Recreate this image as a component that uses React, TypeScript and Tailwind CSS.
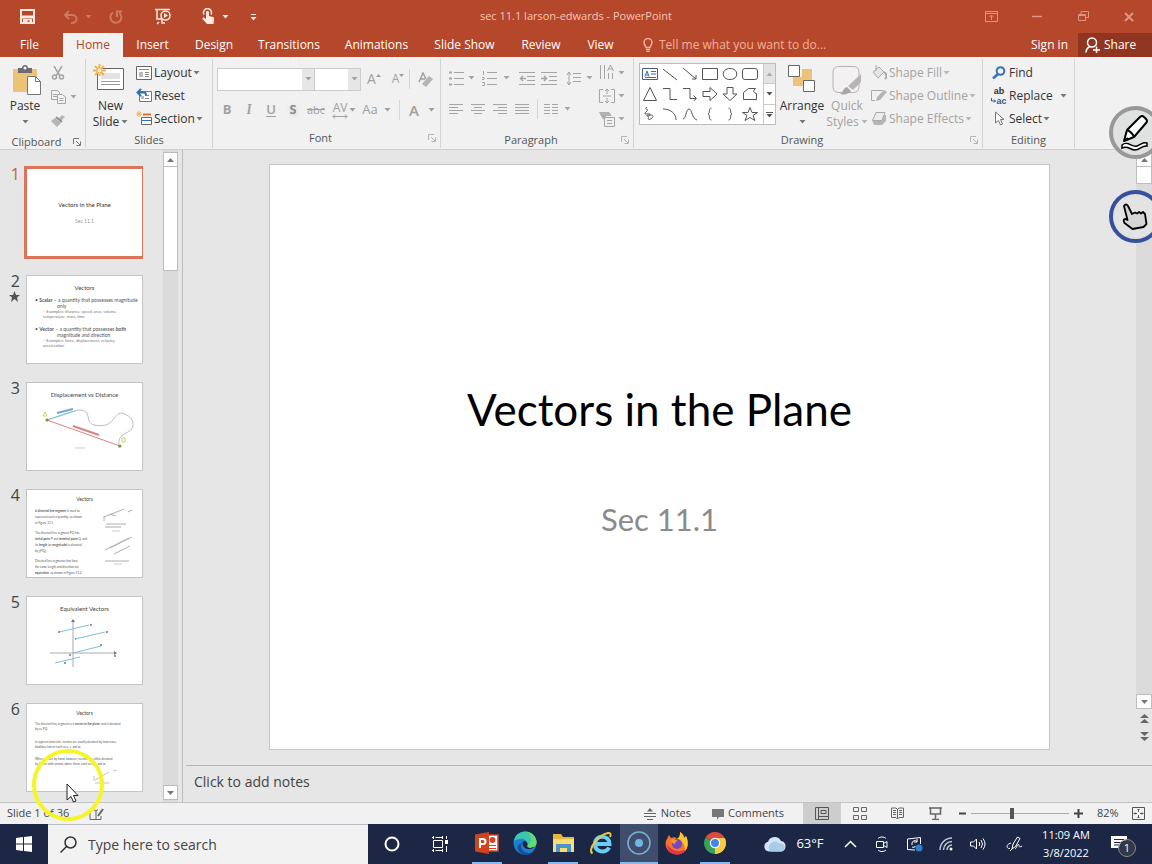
import type { ReactNode } from 'react'
import { clsx } from 'clsx'

// ---------- shared bits ----------

function Svg({ w, h, children, className }: { w: number; h: number; children: ReactNode; className?: string }) {
  return (
    <svg
      width={w}
      height={h}
      viewBox={`0 0 ${w} ${h}`}
      fill="none"
      stroke="currentColor"
      className={clsx('shrink-0', className)}
      aria-hidden="true"
    >
      {children}
    </svg>
  )
}

function Caret({ className }: { className?: string }) {
  return (
    <Svg w={7} h={4} className={className}>
      <path d="M.5 0h6L3.500 3.500z" fill="currentColor" stroke="none" />
    </Svg>
  )
}

function Cell({ w, label, children, className }: { w: string; label: string; children: ReactNode; className?: string }) {
  return (
    <button aria-label={label} className={clsx('flex h-6 shrink-0 items-center justify-center', w, className)}>
      {children}
    </button>
  )
}

function VLine() {
  return <span className="h-5 w-px shrink-0 bg-[#d5d5d5]" />
}

// ---------- title bar ----------

function TitleBar() {
  return (
    <header className="relative flex h-[33px] shrink-0 items-center bg-[#b5472a] text-[#fbe9e2]">
      <div className="flex items-center pl-[15px]">
        <Cell w="w-6" label="Save">
          <Svg w={15} h={15}>
            <path d="M1 1h13v13H1z" strokeWidth="2" />
            <path d="M1 6.500h13v3H1z" fill="currentColor" stroke="none" />
            <path d="M3 10h9v4h-2.500v-2.500h-2V14H3z" fill="currentColor" stroke="none" />
          </Svg>
        </Cell>
        <Cell w="w-6" label="Undo" className="ml-[19px] text-[#d0795f]">
          <Svg w={15} h={14}>
            <path d="M2 5h7.500a4 4 0 0 1 0 8H8M6 1 2 5l4 4" strokeWidth="2" />
          </Svg>
        </Cell>
        <Caret className="ml-[3px] text-[#d0795f]" />
        <Cell w="w-6" label="Redo" className="ml-[12px] text-[#d0795f]">
          <Svg w={14} h={14}>
            <path d="M4 2.500A5.500 5.500 0 1 0 10.500 3M8 7V1.500h5" strokeWidth="2" />
          </Svg>
        </Cell>
        <Cell w="w-6" label="Start From Beginning" className="ml-[23px]">
          <Svg w={18} h={17}>
            <path d="M1 1.500h15M3 2v9h5M5 14l-2 2M8 11v4h3" strokeWidth="1.500" />
            <circle cx="11.500" cy="7.500" r="4.500" strokeWidth="1.500" />
            <path d="M10 5l4 2.500-4 2.500z" fill="currentColor" stroke="none" />
          </Svg>
        </Cell>
        <Cell w="w-6" label="Touch/Mouse Mode" className="ml-[21px]">
          <Svg w={14} h={17}>
            <path
              d="M5 4.500c0-2 3-2 3 0V8l4 1c1 .3 1 1 1 2l-.5 5H6l-4.500-5c-.5-1 1-2 2-1L5 11z"
              fill="currentColor"
              stroke="none"
            />
            <path d="M3 6.500a4 4 0 1 1 7 0" strokeWidth="1.500" />
          </Svg>
        </Cell>
        <Caret className="ml-[2px]" />
        <Cell w="w-6" label="Customize Quick Access Toolbar" className="ml-[12px]">
          <Svg w={7} h={8}>
            <path d="M1 1.500h5" />
            <path d="M.5 4h6l-3 3.500z" fill="currentColor" stroke="none" />
          </Svg>
        </Cell>
      </div>
      <h1 className="absolute inset-x-0 text-center text-[11px] text-[#f8c6b4]">
        sec 11.1 larson-edwards - PowerPoint
      </h1>
      <div className="relative ml-auto flex items-center pr-[11px] text-[#dc9681]">
        <Cell w="w-6" label="Ribbon Display Options">
          <Svg w={13} h={11}>
            <path d="M.5.5h12v10H.5zM.5 2.500h12M6.500 9V4.500M4.500 6l2-2 2 2" />
          </Svg>
        </Cell>
        <Cell w="w-6" label="Minimize" className="ml-[22px]">
          <Svg w={10} h={3}>
            <path d="M0 1.500h10" strokeWidth="1.500" />
          </Svg>
        </Cell>
        <Cell w="w-6" label="Restore Down" className="ml-[22px]">
          <Svg w={11} h={11}>
            <path d="M.5 3.500h7v6h-7zM3 3V.5h7.500v6H8M.5 4.500h7" />
          </Svg>
        </Cell>
        <Cell w="w-6" label="Close" className="ml-[22px]">
          <Svg w={10} h={10}>
            <path d="M1 1l8 8M9 1 1 9" strokeWidth="2" />
          </Svg>
        </Cell>
      </div>
    </header>
  )
}

const tabs = [
  { name: 'File', width: 'w-[63px] pr-1' },
  { name: 'Home', width: 'w-[60px]' },
  { name: 'Insert', width: 'w-[59px]' },
  { name: 'Design', width: 'w-16' },
  { name: 'Transitions', width: 'w-[86px]' },
  { name: 'Animations', width: 'w-[89px]' },
  { name: 'Slide Show', width: 'w-[87px]' },
  { name: 'Review', width: 'w-[66px]' },
  { name: 'View', width: 'w-[53px]' },
]

function TabRow() {
  return (
    <nav className="flex h-6 shrink-0 bg-[#b5472a] text-xs text-white">
      {tabs.map(tab => (
        <button
          key={tab.name}
          className={clsx(
            'flex h-6 items-center justify-center whitespace-nowrap',
            tab.width,
            tab.name === 'Home' && 'bg-[#f1f1f1] text-[#b5472a]',
          )}
        >
          {tab.name}
        </button>
      ))}
      <label className="flex flex-1 items-center gap-[6px] pl-4 text-[#f3b09b]">
        <Svg w={10} h={14}>
          <path d="M3 9.500C3 8 1 7 1 4.500a4 4 0 0 1 8 0C9 7 7 8 7 9.500zM3 11.500h4M3.500 13.500h3" strokeWidth="1.500" />
        </Svg>
        <input
          className="w-48 bg-transparent text-xs placeholder:text-[#f3b09b]"
          placeholder="Tell me what you want to do..."
        />
      </label>
      <button className="px-[10px]">Sign in</button>
      <button className="flex w-[74px] items-center gap-1 bg-[#903620] pl-[7px]">
        <Svg w={15} h={16}>
          <circle cx="7" cy="5.500" r="4.500" strokeWidth="1.500" />
          <path d="M1 15.500c0-3 2-5 4-6M8 13h7M11.500 9.500v7" strokeWidth="1.500" />
        </Svg>
        Share
      </button>
    </nav>
  )
}

// ---------- ribbon ----------

function Group({ label, width, launcher, dim, children }: {
  label: string
  width: string
  launcher?: boolean
  dim?: boolean
  children: ReactNode
}) {
  return (
    <section className={clsx('flex shrink-0 flex-col', width)}>
      <div className="flex h-[89px] flex-col border-r border-[#d4d4d4]">
        <div className="flex h-[73px] pt-[2px]">{children}</div>
        <div className="flex h-5 shrink-0 items-center text-[11px] text-[#555]">
          <span className="flex-1 text-center">{label}</span>
          {launcher && (
            <button aria-label={`${label} settings`} className={clsx('w-3', dim ? 'text-[#b5b5b5]' : 'text-[#777]')}>
              <Svg w={8} h={8}>
                <path d="M.5 6V.5H6M3 3l4 4M7.500 3.500v4h-4" />
              </Svg>
            </button>
          )}
        </div>
      </div>
    </section>
  )
}

function BigButton({ icon, lines, width, dim }: { icon: ReactNode; lines: string[]; width: string; dim?: boolean }) {
  return (
    <button
      className={clsx('flex flex-col items-center whitespace-nowrap pt-[3px] text-xs', width, dim ? 'text-[#a3a3a3]' : 'text-[#333]')}
    >
      {icon}
      <span className="h-5 leading-5">{lines[0]}</span>
      <span className="flex h-3 items-center gap-[2px] leading-3">
        {lines[1]}
        <Caret className={dim ? 'text-[#b5b5b5]' : 'text-[#777]'} />
      </span>
    </button>
  )
}

function SmallButton({ icon, label, caret, dim, caretGap }: {
  icon: ReactNode
  label: string
  caret?: boolean
  dim?: boolean
  caretGap?: boolean
}) {
  return (
    <button
      className={clsx('flex h-[23px] items-center gap-px whitespace-nowrap text-xs', dim ? 'text-[#a3a3a3]' : 'text-[#333]')}
    >
      <span className="flex w-[18px] justify-center">{icon}</span>
      {label}
      {caret && <Caret className={clsx(caretGap && 'ml-[6px]', dim ? 'text-[#b5b5b5]' : 'text-[#777]')} />}
    </button>
  )
}

function ClipboardGroup() {
  return (
    <Group label="Clipboard" width="w-[86px]" launcher>
      <BigButton
        width="w-[50px]"
        lines={['Paste']}
        icon={
          <Svg w={30} h={32} className="ml-1">
            <path d="M1 5h24v23H1z" fill="#ecc376" stroke="none" />
            <path d="M6 4h4c0-4 6-4 6 0h4v5H6z" fill="#6b6b72" stroke="none" />
            <circle cx="13" cy="4" r="1.500" fill="#fff" stroke="none" />
            <path d="M15.500 12.500h8l5 5v13h-13z" fill="#fff" stroke="#777" />
            <path d="M23.500 12.500v5h5" stroke="#777" />
          </Svg>
        }
      />
      <div className="flex flex-col text-[#a5a5a5]">
        <Cell w="w-4" label="Cut">
          <Svg w={14} h={14}>
            <path d="M3 0l6 10M11 0 5 10" strokeWidth="1.500" />
            <circle cx="3.500" cy="11" r="2" strokeWidth="1.500" />
            <circle cx="10.500" cy="11" r="2" strokeWidth="1.500" />
          </Svg>
        </Cell>
        <div className="flex items-center gap-1">
          <Cell w="w-4" label="Copy">
            <Svg w={15} h={14}>
              <path d="M.5.5h6l2 2v7h-8zM2 4.500h4M2 6.500h4" />
              <path d="M6.500 4.500h5l3 2.500v6.500h-8z" fill="#f1f1f1" />
              <path d="M8.500 8.500h4M8.500 10.500h4" />
            </Svg>
          </Cell>
          <Caret />
        </div>
        <Cell w="w-4" label="Format Painter">
          <Svg w={16} h={14}>
            <path d="M1 7l4-3 6 5-4 4zM9 4l3-3 3 2-4 4z" fill="#b5b5b5" stroke="none" />
            <path d="M6 3l6 5" stroke="#8f8f8f" strokeWidth="2" />
          </Svg>
        </Cell>
      </div>
    </Group>
  )
}

function SlidesGroup() {
  return (
    <Group label="Slides" width="w-[127px]">
      <BigButton
        width="w-[49px]"
        lines={['New', 'Slide']}
        icon={
          <Svg w={32} h={32} className="mr-1">
            <path d="M4.500 4.500h26v21h-26z" fill="#fff" stroke="#666" />
            <path d="M8 9h19v6H8z" fill="#e3e3e3" stroke="none" />
            <path d="M8 17.500h19M8 20.500h19" stroke="#999" />
            <path d="M6.500 0v12M0 6.500h13M2 2l9 9M11 2l-9 9" stroke="#f1b357" strokeWidth="2" />
            <circle cx="6.500" cy="6.500" r="2.500" fill="#fff6e0" stroke="#f1b357" />
          </Svg>
        }
      />
      <div className="flex flex-col">
        <SmallButton
          label="Layout"
          caret
          icon={
            <Svg w={16} h={14}>
              <path d="M.5.5h15v13H.5z" fill="#fff" stroke="#666" />
              <path d="M3 3.500h10M9 6.500h4M9 8.500h4M9 10.500h4" stroke="#888" />
              <path d="M3 6h4v5H3z" fill="#b9b9b9" stroke="none" />
            </Svg>
          }
        />
        <SmallButton
          label="Reset"
          icon={
            <Svg w={16} h={15}>
              <path d="M3.500 3.500h12v10h-12z" fill="#fff" stroke="#777" />
              <path d="M9 7.500h4M9 10.500h4" stroke="#888" />
              <path d="M5 8h3v3H5z" fill="#b9b9b9" stroke="none" />
              <path d="M2 4.500h6c1.500 0 2 1 2 3M5 1 1.500 4.500 5 8" stroke="#3572b0" strokeWidth="2" />
            </Svg>
          }
        />
        <SmallButton
          label="Section"
          caret
          icon={
            <Svg w={16} h={15}>
              <path d="M3 0v6M0 3h6M1 1l4 4M5 1 1 5" stroke="#f1b357" />
              <path d="M7 3.500h8" stroke="#d9762b" strokeWidth="2" />
              <path d="M5.500 6.500h10v7h-10z" fill="#fff" stroke="#666" />
              <path d="M6 9.500h9" stroke="#3572b0" />
            </Svg>
          }
        />
      </div>
    </Group>
  )
}

function FontGroup() {
  return (
    <Group label="Font" width="w-[228px]" launcher dim>
      <div className="flex flex-col gap-[7px] pl-1 pt-[6px] text-[#a0a0a0]">
        <div className="flex items-center">
          <div className="flex h-[23px] w-[98px] border border-[#ccc] bg-white">
            <input aria-label="Font name" className="w-full min-w-0" disabled />
            <span className="flex w-3 shrink-0 items-center justify-center bg-[#e6e6e6]"><Caret /></span>
          </div>
          <div className="flex h-[23px] w-[46px] border border-l-0 border-[#ccc] bg-white">
            <input aria-label="Font size" className="w-full min-w-0" disabled />
            <span className="flex w-3 shrink-0 items-center justify-center bg-[#e6e6e6]"><Caret /></span>
          </div>
          <Cell w="w-[26px]" label="Increase Font Size">
            <span className="text-sm">A</span>
            <Svg w={5} h={3} className="mb-2"><path d="M0 3 2.500 0 5 3z" fill="currentColor" stroke="none" /></Svg>
          </Cell>
          <Cell w="w-[22px]" label="Decrease Font Size">
            <span className="text-xs">A</span>
            <Svg w={5} h={3} className="mb-2"><path d="M0 0h5L2.500 3z" fill="currentColor" stroke="none" /></Svg>
          </Cell>
          <VLine />
          <Cell w="w-[30px]" label="Clear All Formatting">
            <Svg w={15} h={15}>
              <path d="M1 10 5 1l3 6M2.500 7H7" strokeWidth="1.500" />
              <path d="M4 12l7-8 4 3-7 8z" fill="#b5b5b5" stroke="none" />
            </Svg>
          </Cell>
        </div>
        <div className="flex items-center text-[13px]">
          <Cell w="w-5" label="Bold"><b>B</b></Cell>
          <Cell w="w-6" label="Italic"><i className="font-serif font-bold">I</i></Cell>
          <Cell w="w-5" label="Underline"><span className="font-semibold underline underline-offset-2">U</span></Cell>
          <Cell w="w-6" label="Text Shadow"><b className="text-[#8c8c8c] drop-shadow-sm">S</b></Cell>
          <Cell w="w-[22px]" label="Strikethrough"><span className="text-[11px] line-through">abc</span></Cell>
          <Cell w="w-[26px]" label="Character Spacing" className="flex-col">
            <span className="text-xs leading-3">AV</span>
            <Svg w={16} h={5}><path d="M1 2.500h14M3 .5l-2 2 2 2M13 .5l2 2-2 2" /></Svg>
          </Cell>
          <Caret className="-ml-1" />
          <Cell w="w-7" label="Change Case">Aa</Cell>
          <Caret />
          <span className="w-2" />
          <VLine />
          <Cell w="w-[28px]" label="Font Color"><span className="text-[15px] font-semibold">A</span></Cell>
          <Caret />
        </div>
      </div>
    </Group>
  )
}

function Lines({ rows, w = 15 }: { rows: [number, number][]; w?: number }) {
  return (
    <Svg w={w} h={12}>
      {rows.map(([a, b], i) => (
        <path key={i} d={`M${a} ${i * 3 + 1.5}H${b}`} />
      ))}
    </Svg>
  )
}

function ParagraphGroup() {
  const list = (numbered: boolean) => (
    <Svg w={15} h={15}>
      {[1.5, 7.5, 13.5].map(y => (
        <path key={y} d={`M5 ${y}h10`} />
      ))}
      {numbered
        ? <path d="M1.500 0v4M0 6.500h2v2H0M0 11.500h2.500M0 14.500h2.500v-3" />
        : <path d="M0 1.500h3M0 7.500h3M0 13.500h3" strokeWidth="2" />}
    </Svg>
  )
  return (
    <Group label="Paragraph" width="w-[193px]" launcher dim>
      <div className="flex flex-col gap-[7px] pl-1 pt-[5px] text-[#a5a5a5]">
        <div className="flex items-center">
          <Cell w="w-[22px]" label="Bullets">{list(false)}</Cell>
          <Caret className="ml-px" />
          <Cell w="w-[28px]" label="Numbering">{list(true)}</Cell>
          <Caret />
          <span className="w-[6px]" />
          <Cell w="w-[22px]" label="Decrease List Level">
            <Svg w={16} h={13}><path d="M0 .5h16M8 4.500h8M8 8.500h8M0 12.500h16" /><path d="M7 6.500H1M4 4 1.500 6.500 4 9" strokeWidth="1.500" /></Svg>
          </Cell>
          <Cell w="w-[22px]" label="Increase List Level">
            <Svg w={16} h={13}><path d="M0 .5h16M8 4.500h8M8 8.500h8M0 12.500h16" /><path d="M0 6.500h6M3 4l2.500 2.500L3 9" strokeWidth="1.500" /></Svg>
          </Cell>
          <Cell w="w-[26px]" label="Line Spacing">
            <Svg w={15} h={15}><path d="M7 2.500h8M7 6.500h8M7 10.500h8M3 1v13M1 4l2-3 2 3M1 11l2 3 2-3" /></Svg>
          </Cell>
          <Caret />
        </div>
        <div className="flex items-center">
          <Cell w="w-[22px]" label="Align Left"><Lines rows={[[0, 14], [0, 9], [0, 14], [0, 9]]} /></Cell>
          <Cell w="w-[22px]" label="Center"><Lines rows={[[0, 14], [3, 11], [0, 14], [3, 11]]} /></Cell>
          <Cell w="w-[22px]" label="Align Right"><Lines rows={[[0, 14], [5, 14], [0, 14], [5, 14]]} /></Cell>
          <Cell w="w-[22px]" label="Justify"><Lines rows={[[0, 14], [0, 14], [0, 14], [0, 14]]} /></Cell>
          <span className="w-1" />
          <VLine />
          <Cell w="w-[26px]" label="Columns">
            <Svg w={14} h={12}>
              <path d="M0 1.500h6M8 1.500h6M0 4.500h6M8 4.500h6M0 7.500h6M8 7.500h6M0 10.500h6M8 10.500h6" />
            </Svg>
          </Cell>
          <Caret />
        </div>
      </div>
      <div className="ml-auto flex w-[34px] flex-col text-[#a5a5a5]">
        <button aria-label="Text Direction" className="flex h-[23px] items-center gap-[3px]">
          <Svg w={16} h={16}><path d="M1.500 0v14M5.500 0v14M9.500 8v6M13.500 8v6M8.500 6l3-6 3 6M9.500 4h4" /></Svg>
          <Caret />
        </button>
        <button aria-label="Align Text" className="flex h-[23px] items-center gap-[3px]">
          <Svg w={16} h={16}><path d="M4 1.500H.5v13H4M12 1.500h3.500v13H12M8 1v5M6 3l2-2 2 2M8 15v-5M6 13l2 2 2-2M4 8h8" /></Svg>
          <Caret />
        </button>
        <button aria-label="Convert to SmartArt" className="flex h-[23px] items-center gap-[3px]">
          <Svg w={16} h={16}>
            <path d="M0 1h10l3 4H7v5L3 7z" fill="#b0b0b0" stroke="none" />
            <path d="M5.500 6.500h10v9h-10z" fill="#f1f1f1" />
            <path d="M8 9.500h5M8 12.500h5" />
          </Svg>
          <Caret />
        </button>
      </div>
    </Group>
  )
}

// 6 x 3 shape gallery, every shape sits in a 16x14 box
const shapes = [
  'M1 2l14 11',
  'M1 1l13 11M14 8v4h-4',
  'M.5 1.500h15v11H.5z',
  'M8 1.500c9 0 9 11 0 11s-9-11 0-11z',
  'M3 1.500h10q2.500 0 2.500 2.500v6q0 2.500-2.500 2.500H3q-2.500 0-2.500-2.500V4q0-2.500 2.500-2.500z',
  'M8 .5l6.500 13h-13z',
  'M1 1.500h7v11h7',
  'M1 1.500h7v10h6M11.500 8.500l3 3-3 2.500',
  'M1 4.500h7v-4l7 6.500-7 6.500v-4H1z',
  'M5 .5h6V7h4l-7 6.500L1 7h4z',
  'M1.500 12.500v-7l5-4h7q-4 4 1 5v6z',
  'M5 0C0 3 9 1 4 5s6 0 4 3-5 0-2 0 7 0 4 3-5 1-3-1',
  'M1 2c7 0 13 4 13 11',
  'M1 12C4 12 4 2 7 2s3 10 8 11',
  'M9.500 1C6 1 8.500 6.500 6 7c2.500.5 0 6 3.500 6',
  'M6.500 1C10 1 7.500 6.500 10 7c-2.500.5 0 6-3.500 6',
  'M8 .5l2 5h5.500l-4.500 3 2 5-5-3-5 3 2-5L.5 5.500H6z',
]

function DrawingGroup() {
  return (
    <Group label="Drawing" width="w-[349px]" launcher dim>
      <div className="ml-[5px] mt-[2px] flex h-[62px] border border-[#bdbdbd] bg-white text-[#555]">
        <div className="grid w-[123px] grid-cols-6 grid-rows-3 place-items-center pr-[3px]">
          <button aria-label="Text Box">
            <Svg w={16} h={14}>
              <path d="M.5 1.500h15v11H.5z" stroke="#44608a" />
              <path d="M3 9.500 5 4l2 5.500M4 8h2M9 4.500h5M9 7h5M3 10.500h11" stroke="#3572b0" />
            </Svg>
          </button>
          {shapes.map((d, i) => (
            <button key={i} aria-label={`Shape ${i + 1}`}>
              <Svg w={16} h={14}><path d={d} /></Svg>
            </button>
          ))}
        </div>
        <div className="flex w-3 flex-col divide-y divide-[#c8c8c8] border-l border-[#c8c8c8]">
          <button aria-label="Row up" className="flex flex-1 items-center justify-center bg-[#e3e3e3]">
            <Caret className="rotate-180 text-[#aaa]" />
          </button>
          <button aria-label="Row down" className="flex flex-1 items-center justify-center"><Caret /></button>
          <button aria-label="More shapes" className="flex flex-1 items-center justify-center">
            <Svg w={7} h={7}><path d="M0 1.500h7" /><path d="M.5 3h6l-3 3.500z" fill="currentColor" stroke="none" /></Svg>
          </button>
        </div>
      </div>
      <BigButton
        width="w-[52px]"
        lines={['Arrange']}
        icon={
          <Svg w={28} h={32}>
            <path d="M14 5h10v11H14zM5 13h11v9H5z" fill="#ecc376" stroke="none" />
            <path d="M.5 1.500h11v11H.5zM15.500 16.500h11v11h-11z" fill="#fff" stroke="#666" />
          </Svg>
        }
      />
      <BigButton
        dim
        width="w-[38px]"
        lines={['Quick', 'Styles']}
        icon={
          <Svg w={30} h={32}>
            <path d="M7 2.500h14q6 0 6 6v14q0 6-6 6H7q-6 0-6-6v-14q0-6 6-6z" fill="#f4f1f2" stroke="#bbb0b3" />
            <path d="M29 10v8l-8 8-5-4z" fill="#b5b5b5" stroke="none" />
            <path d="M8 30c3-1 3-6 7-7l4 4c-2 3-7 4-11 3z" fill="#a8a8a8" stroke="none" />
          </Svg>
        }
      />
      <div className="ml-1 flex flex-col">
        <SmallButton
          dim
          caret
          label="Shape Fill"
          icon={
            <Svg w={16} h={15}>
              <path d="M2 7l6-5 5 5-6 6zM5 6V0" fill="#e4e4e4" stroke="#aaa" />
              <path d="M13 7c3 2 3 5 1 7" stroke="#aaa" strokeWidth="2" />
            </Svg>
          }
        />
        <SmallButton
          dim
          caret
          label="Shape Outline"
          icon={
            <Svg w={16} h={13}>
              <path d="M12 1.500H.5v10H4M7 10.500l7-8" stroke="#aaa" />
              <path d="M5 12l1-4 7-7 3 2-7 8z" fill="#b5b5b5" stroke="none" />
            </Svg>
          }
        />
        <SmallButton
          dim
          caret
          label="Shape Effects"
          icon={
            <Svg w={16} h={13}>
              <path d="M5 3h10v6l-4 4H3L1 8z" fill="#b5b5b5" stroke="none" />
              <path d="M5 .5h9l-3 8H1.500z" fill="#ececec" stroke="#aaa" />
            </Svg>
          }
        />
      </div>
    </Group>
  )
}

function EditingGroup() {
  return (
    <Group label="Editing" width="w-[92px]">
      <div className="flex flex-col pl-[7px]">
        <SmallButton
          label="Find"
          icon={
            <Svg w={14} h={13} className="text-[#3572b0]">
              <circle cx="8.500" cy="5" r="3.800" strokeWidth="2" />
              <path d="M6 8l-5 4.500" strokeWidth="2.500" />
            </Svg>
          }
        />
        <SmallButton
          label="Replace"
          caret
          caretGap
          icon={
            <span className="flex flex-col font-['Liberation_Sans',sans-serif] text-[9px] font-bold leading-[10px]">
              <span>ab</span>
              <span className="flex items-center text-[#41528f]">
                <Svg w={5} h={5}><path d="M.5 0v3h4M3 1.500 4.500 3 3 4.500" /></Svg>
                ac
              </span>
            </span>
          }
        />
        <SmallButton
          label="Select"
          caret
          icon={
            <Svg w={11} h={15}>
              <path d="M1.500 1v11l3-2.500 2 4.500 2-1-2-4.500H10z" fill="#fff" stroke="#777" />
            </Svg>
          }
        />
      </div>
    </Group>
  )
}

// ---------- slide panel ----------

function Thumb({ number, active, star, children }: { number: number; active?: boolean; star?: boolean; children: ReactNode }) {
  return (
    <li className="flex gap-[6px]">
      <div className="flex w-5 flex-col items-end">
        <span className={clsx('text-base leading-3', active ? 'text-[#c8603f]' : 'text-[#444]')}>{number}</span>
        {star && (
          <Svg w={11} h={11} className="mt-1 text-[#555]">
            <path d="M5.500 0l1.500 4h4L8 6.500l1 4.500-3.500-3L2 11l1-4.500L0 4h4z" fill="currentColor" stroke="none" />
          </Svg>
        )}
      </div>
      <button
        aria-label={`Slide ${number}`}
        className={clsx(
          'flex h-[89px] w-[117px] flex-col justify-start overflow-hidden bg-white text-left font-[Lato,sans-serif] whitespace-nowrap text-[#555]',
          active ? 'outline-3 -outline-offset-1 outline-[#dc7459]' : 'border border-[#c4c4c4]',
        )}
      >
        {children}
      </button>
    </li>
  )
}

function ThumbTitle({ children }: { children: ReactNode }) {
  return <p className="w-full pt-2 text-center text-[6px] leading-[7px] text-[#444]">{children}</p>
}

function SlideList() {
  return (
    <ol className="flex h-full flex-col gap-[18px] overflow-hidden pt-[18px]">
      <Thumb number={1} active>
        <div className="flex h-full w-full flex-col items-center justify-center gap-[10px] pb-1">
          <p className="pt-1 text-[6px] leading-[7px] text-[#333]">Vectors in the Plane</p>
          <p className="text-[5px] leading-[6px] text-[#999]">Sec 11.1</p>
        </div>
      </Thumb>
      <Thumb number={2} star>
        <ThumbTitle>Vectors</ThumbTitle>
        <div className="pl-2 pt-[6px] text-[5px] leading-[6px]">
          <p>• <b>Scalar</b> – a quantity that possesses magnitude</p>
          <p className="pl-[22px]">only</p>
          <div className="pl-2 text-[4px] leading-[5px] text-[#777]">
            <p>– Examples: distance, speed, area, volume,</p>
            <p>temperature, mass, time</p>
          </div>
          <p className="pt-[7px]">• <b>Vector</b> – a quantity that possesses <b>both</b></p>
          <p className="pl-[22px]">magnitude and direction</p>
          <div className="pl-2 text-[4px] leading-[5px] text-[#777]">
            <p>– Examples: force, displacement, velocity,</p>
            <p>acceleration</p>
          </div>
        </div>
      </Thumb>
      <Thumb number={3}>
        <ThumbTitle>Displacement vs Distance</ThumbTitle>
        <Svg w={115} h={72}>
          <path d="M20 22c12-4 22-8 32-10 14 0 5 12 15 15 22 4 18-12 28-12 14 4 14 16 4 20-6 3-8 6-7 15" stroke="#b3bcd2" />
          <path d="M20 22l28-9" stroke="#82bfe2" />
          <path d="M20 22l73 26" stroke="#d98484" />
          <path d="M30 15l16-4" stroke="#6fa9cb" strokeWidth="2" />
          <path d="M46 28l26 9" stroke="#d78484" strokeWidth="2" />
          <circle cx="20" cy="22" r="1.500" fill="#888a2a" stroke="none" />
          <circle cx="93" cy="48" r="1.500" fill="#888a2a" stroke="none" />
          <path d="M16 18l2-4 2 4zM95 40h3v4h-3z" stroke="#c9cf70" />
          <path d="M48 50h10" stroke="#ccc" />
        </Svg>
      </Thumb>
      <Thumb number={4}>
        <p className="w-full pt-[6px] text-center text-[5px] leading-[7px] text-[#444]">Vectors</p>
        <div className="flex w-full justify-between pl-2 pr-[6px] pt-[5px] text-[3px] leading-[6px]">
          <div>
            <p>A <b>directed line segment</b> is used to</p>
            <p>represent such a quantity, as shown</p>
            <p>in Figure 11.1.</p>
            <p className="pt-1">The directed line segment PQ has</p>
            <p><b>initial point</b> P and <b>terminal point</b> Q, and</p>
            <p>its <b>length</b> (or <b>magnitude</b>) is denoted</p>
            <p>by ‖PQ‖.</p>
            <p className="pt-1">Directed line segments that have</p>
            <p>the same length and direction are</p>
            <p><b>equivalent</b>, as shown in Figure 11.2.</p>
          </div>
          <Svg w={34} h={60}>
            <path d="M2 9l20-8M4 16h20M8 6l6 2M26 4l4-2M2 8v5M3 42l24-12M8 40l22-11M12 46l16-8" stroke="#b0b0b0" />
            <path d="M3 19h16M3 53h24" stroke="#aaa" />
            <path d="M10 23h8M12 56h8" stroke="#ccc" />
          </Svg>
        </div>
      </Thumb>
      <Thumb number={5}>
        <ThumbTitle>Equivalent Vectors</ThumbTitle>
        <Svg w={115} h={72}>
          <path d="M46 8v47M23 41h66" stroke="#aaa" />
          <path d="M44 10l2-3 2 3zM87 39l3 2-3 2z" fill="#777" stroke="none" />
          <path d="M32 20l30-7M48 27l30-7M46 41l28-7M28 51l25-6" stroke="#7cc0dc" />
          <path d="M31 19h2v2h-2zM63 12h2v2h-2zM79 19h2v2h-2zM48 26h1v2h-1zM73 32h2v2h-2zM37 50h2v2h-2zM42 42h2v2h-2zM87 43h2v2h-2z" fill="#999" stroke="none" />
        </Svg>
      </Thumb>
      <Thumb number={6}>
        <p className="w-full pt-[6px] text-center text-[5px] leading-[7px] text-[#444]">Vectors</p>
        <div className="pl-2 pt-[5px] text-[3px] leading-[5px]">
          <p>The directed line segment is a <b>vector in the plane</b>, and is denoted</p>
          <p>by v= PQ.</p>
          <p className="pt-2">In typeset materials, vectors are usually denoted by lowercase,</p>
          <p>boldface letters such as u, v, and w.</p>
          <p className="pt-[7px]">When written by hand, however, vectors are often denoted</p>
          <p>by letters with arrows above them, such as u, v, and w.</p>
        </div>
        <Svg w={115} h={20}>
          <path d="M68 13l14-8M86 4l4-1M67 9v5M68 16h14" stroke="#c4c4c4" />
        </Svg>
      </Thumb>
    </ol>
  )
}

function ArrowButton({ up }: { up?: boolean }) {
  return (
    <button
      aria-label={up ? 'Scroll up' : 'Scroll down'}
      className="flex h-[15px] w-full shrink-0 items-center justify-center border border-[#bdbdbd] bg-white text-[#777]"
    >
      <Svg w={7} h={4} className={clsx(up && 'rotate-180')}>
        <path d="M0 0h7L3.500 4z" fill="currentColor" stroke="none" />
      </Svg>
    </button>
  )
}

function Workspace() {
  return (
    <main className="flex min-h-0 flex-1 bg-[#e6e6e6]">
      <aside className="flex w-[183px] shrink-0 justify-between border-r border-[#bcbcbc]">
        <SlideList />
        <div className="mr-1 flex w-[15px] flex-col bg-[#dbdbdb] pb-[2px] pt-[2px]">
          <ArrowButton up />
          <div className="h-[104px] border border-t-0 border-[#bdbdbd] bg-white" />
          <div className="flex-1" />
          <ArrowButton />
        </div>
      </aside>
      <div className="flex min-w-0 flex-1 flex-col">
        <div className="flex min-h-0 flex-1">
          <div className="flex min-w-0 flex-1 justify-center pb-[15px] pt-[14px]">
            <article className="flex aspect-[4/3] h-full flex-col items-center justify-center gap-[60px] border border-[#c6c6c6] bg-white pt-1 font-[Lato,sans-serif]">
              <h2 className="text-[44px] leading-[60px] text-black">Vectors in the Plane</h2>
              <p className="text-[31px] leading-[40px] text-[#8b8b8b]">Sec 11.1</p>
            </article>
          </div>
          <div className="flex w-4 flex-col bg-[#dbdbdb] pt-[2px]">
            <ArrowButton up />
            <div className="h-[17px] border border-t-0 border-[#bdbdbd] bg-white" />
            <div className="flex-1" />
            <ArrowButton />
            <div className="flex h-14 flex-col items-center gap-[9px] bg-[#e6e6e6] pt-[5px] text-[#666]">
              <button aria-label="Previous Slide">
                <Svg w={9} h={9}><path d="M0 4l4.500-4L9 4zM0 9l4.500-4L9 9z" fill="currentColor" stroke="none" /></Svg>
              </button>
              <button aria-label="Next Slide">
                <Svg w={9} h={9}><path d="M0 0h9L4.500 4zM0 5h9L4.500 9z" fill="currentColor" stroke="none" /></Svg>
              </button>
            </div>
          </div>
        </div>
        <div className="ml-[3px] h-[37px] shrink-0 border-t border-[#b5b5b5]">
          <input
            aria-label="Notes"
            placeholder="Click to add notes"
            className="h-[30px] w-full bg-transparent pl-2 text-sm placeholder:text-[#444]"
          />
        </div>
      </div>
    </main>
  )
}

// ---------- status bar ----------

function StatusBar() {
  return (
    <div className="flex h-[22px] shrink-0 items-center border-t border-[#c3c3c3] bg-[#f1f1f1] text-[11px] text-[#444]">
      <span className="pl-[7px]">Slide 1 of 36</span>
      <button aria-label="Spelling" className="ml-5 text-[#666]">
        <Svg w={15} h={13}>
          <path d="M7 12.500H1v-10h3.500L7 4v8.500h5V9M7 4l2-1.500" />
          <path d="M9 9l5-7" strokeWidth="2" />
        </Svg>
      </button>
      <div className="ml-auto flex h-full items-center">
        <button className="flex items-center gap-[5px]">
          <Svg w={12} h={12}>
            <path d="M0 5.500h12M0 8.500h12M3 11.500h6" stroke="#666" />
            <path d="M3 3.500 6 0l3 3.500z" fill="#666" stroke="none" />
          </Svg>
          Notes
        </button>
        <button className="ml-[21px] flex items-center gap-[4px]">
          <Svg w={12} h={12}>
            <path d="M0 1h12v8H7l-2 3V9H0z" fill="#777" stroke="none" />
          </Svg>
          Comments
        </button>
        <button aria-label="Normal" className="ml-[19px] flex h-full w-[38px] items-center justify-center bg-[#cdcdcd] text-[#555]">
          <Svg w={14} h={13}><path d="M.5.5h13v12H.5zM3.500 1v11M6 3.500h5v3H6zM3.500 9.500h10" /></Svg>
        </button>
        <button aria-label="Slide Sorter" className="flex w-[38px] justify-center text-[#666]">
          <Svg w={14} h={13}><path d="M.5.5h5v4h-5zM8.500.5h5v4h-5zM.5 8.500h5v4h-5zM8.500 8.500h5v4h-5z" /></Svg>
        </button>
        <button aria-label="Reading View" className="flex w-[37px] justify-center text-[#666]">
          <Svg w={13} h={13}><path d="M6.500 2.500 5 1H.5v9.500H5L6.500 12 8 10.500h4.500V1H8zM6.500 2v10M2 3.500h3M2 5.500h3M2 7.500h3M8 3.500h3M8 5.500h3M8 7.500h3" /></Svg>
        </button>
        <button aria-label="Slide Show view" className="flex w-[38px] justify-center text-[#666]">
          <Svg w={13} h={13}><path d="M0 1h13M1.500 1v6h10V1M6.500 7v5M3 12.500h7" strokeWidth="1.500" /></Svg>
        </button>
        <button aria-label="Zoom Out" className="ml-[5px]">
          <Svg w={7} h={3}><path d="M0 1.500h7" strokeWidth="2" /></Svg>
        </button>
        <input
          type="range"
          aria-label="Zoom"
          min={0}
          max={100}
          defaultValue={41}
          className="mx-[5px] h-3 w-[98px] appearance-none bg-[linear-gradient(#aaa,#aaa)] bg-[length:100%_1px] bg-center bg-no-repeat [&::-webkit-slider-thumb]:h-[11px] [&::-webkit-slider-thumb]:w-[4px] [&::-webkit-slider-thumb]:appearance-none [&::-webkit-slider-thumb]:bg-[#555]"
        />
        <button aria-label="Zoom In">
          <Svg w={9} h={9}><path d="M0 4.500h9M4.500 0v9" strokeWidth="2" /></Svg>
        </button>
        <span className="ml-[14px] w-[25px]">82%</span>
        <button aria-label="Fit slide to window" className="ml-[10px] mr-[7px] text-[#555]">
          <Svg w={13} h={13}>
            <path d="M.5.5h12v12H.5zM6.500 2v3M6.500 8v3M2 6.500h3M8 6.500h3M5.500 3l1-1 1 1M5.500 10l1 1 1-1M3 5.500l-1 1 1 1M10 5.500l1 1-1 1" />
          </Svg>
        </button>
      </div>
    </div>
  )
}

// ---------- windows taskbar ----------

function EdgeIcon() {
  return (
    <Svg w={24} h={24}>
      <circle cx="12" cy="12" r="11.500" fill="#1c7fd0" stroke="none" />
      <path d="M1 10C2 4 7 .5 12 .5 19 .5 24 6 23.500 12c-.5 3-3 5-6 5-3 0-4-1.500-3-3 1-4-4-7-8-6-2 .5-4 1-5.500 2z" fill="#3cc6b0" stroke="none" />
      <path d="M14 .8c6 1 10 6 9.500 11.200-.5 3-3 5-6 5-3 0-4-1.500-3-3 6-3 4-10-.5-13.200z" fill="#67d86a" stroke="none" />
      <path d="M9 12c-3 4 1 10 7 10 2 0 4-1 5-2-3 4-8 4.500-12 3-6-3-6-10 0-11z" fill="#17509a" stroke="none" />
      <path d="M11 10c2 0 3.500 1.500 3.500 3.500-1 2 0 3.500 3 3.500l4-1.500c-4 5-12 2-12-3 0-1 .5-2 1.500-2.500z" fill="#1b2745" stroke="none" />
    </Svg>
  )
}

function FirefoxIcon() {
  return (
    <Svg w={24} h={24}>
      <path d="M4 4l2 3 4-1 2 2c3-2 3-4 3-7 3 2 4 4 4 6l2-2c4 9 1 18-9 18.500C3 23.500-2 14 2 8z" fill="#f5742a" stroke="none" />
      <path d="M15 1c3 2 4 4 4 6l2-2c3 6 2 12-1 15 0-7-3-11-8-12 3-2 3-4 3-7z" fill="#fbc531" stroke="none" />
      <path d="M2 13c0 6 4 10.500 10 10.500 4 0 7-2 8.500-5C14 22 6 20 2 13z" fill="#e6304f" stroke="none" />
      <circle cx="12" cy="13" r="5" fill="#7748c4" stroke="none" />
      <path d="M6 9c3-1 5 0 7 1-2 0-3 1-3 3-2 0-4-2-4-4z" fill="#f79a2f" stroke="none" />
    </Svg>
  )
}

function ChromeIcon() {
  return (
    <Svg w={22} h={22}>
      <path d="M11 11 1.500 5.500A11 11 0 0 1 20.500 5.500z" fill="#de4a3c" stroke="none" />
      <path d="M11 11h9.500V5.500A11 11 0 0 1 11 22z" fill="#f7cb3f" stroke="none" />
      <path d="M11 11v11A11 11 0 0 1 1.500 5.500z" fill="#36a355" stroke="none" />
      <path d="M11 6h9.700a11 11 0 0 1-9.700 16l4.500-8z" fill="#f7cb3f" stroke="none" />
      <circle cx="11" cy="11" r="5.200" fill="#fff" stroke="none" />
      <circle cx="11" cy="11" r="4" fill="#4486ee" stroke="none" />
    </Svg>
  )
}

const apps: { name: string; open?: boolean; active?: boolean; icon: ReactNode }[] = [
  {
    name: 'PowerPoint',
    open: true,
    icon: (
      <Svg w={24} h={22}>
        <path d="M12 3h11v16H12z" fill="#fff" stroke="#cf4526" strokeWidth="1.500" />
        <path d="M14 13.500h7M14 16.500h7" stroke="#cf4526" />
        <circle cx="17.500" cy="8" r="3" fill="#cf4526" stroke="none" />
        <path d="M0 2.500 14 0v22L0 19.500z" fill="#d1431f" stroke="none" />
        <path d="M5 16V7h3a2.500 2.500 0 0 1 0 5H5" stroke="#fff" strokeWidth="2" />
      </Svg>
    ),
  },
  { name: 'Edge', icon: <EdgeIcon /> },
  {
    name: 'File Explorer',
    open: true,
    icon: (
      <Svg w={23} h={20}>
        <path d="M1 1h8l2 3h11v15H1z" fill="#e9b53c" stroke="none" />
        <path d="M1 6h21v13H1z" fill="#fbdc72" stroke="none" />
        <path d="M4 11h15v8h-4v-4H8v4H4z" fill="#4b93cf" stroke="none" />
      </Svg>
    ),
  },
  {
    name: 'Internet Explorer',
    icon: (
      <Svg w={24} h={24}>
        <path d="M6 13h14.500c0-9.500-14.500-10-14.500 0 0 9 11.500 9.500 14 3.500" stroke="#6bcdf3" strokeWidth="4" />
        <path d="M3.500 22.500C-2 19 9 4 19 2c3-.5 3 2 2 4" stroke="#f0c43c" strokeWidth="2" />
      </Svg>
    ),
  },
  {
    name: 'Screen Recorder',
    open: true,
    active: true,
    icon: (
      <Svg w={24} h={24}>
        <circle cx="12" cy="12" r="11" stroke="#78b4cf" strokeWidth="1.500" />
        <circle cx="12" cy="12" r="4" fill="#6fb7e6" stroke="none" />
      </Svg>
    ),
  },
  { name: 'Firefox', icon: <FirefoxIcon /> },
  { name: 'Chrome', open: true, icon: <ChromeIcon /> },
]

function Taskbar() {
  return (
    <footer className="flex h-10 shrink-0 bg-[#1b2745] text-white">
      <button aria-label="Start" className="flex w-12 items-center justify-center">
        <Svg w={16} h={16}>
          <path d="M0 2l7-1v6.500H0zM8 1l8-1v7.500H8zM0 8.500h7V15l-7-1zM8 8.500h8V16l-8-1z" fill="#fff" stroke="none" />
        </Svg>
      </button>
      <label className="flex w-80 items-center gap-[11px] border-t border-[#b9bcc2] bg-[#f2f2f2] pl-3 text-[#333]">
        <Svg w={17} h={17}>
          <circle cx="10.500" cy="6.500" r="5.500" strokeWidth="1.500" />
          <path d="M6.500 10.500.5 16.500" strokeWidth="1.500" />
        </Svg>
        <input className="min-w-0 flex-1 bg-transparent text-sm placeholder:text-[#444]" placeholder="Type here to search" />
      </label>
      <button aria-label="Cortana" className="flex w-12 items-center justify-center">
        <Svg w={16} h={16}><circle cx="8" cy="8" r="6.500" strokeWidth="2" /></Svg>
      </button>
      <button aria-label="Task View" className="mr-1 flex w-12 items-center justify-center">
        <Svg w={16} h={16}>
          <path d="M0 1.500h2M3.500 1.500h7M0 14.500h2M3.500 14.500h7M1.500 4.500h9v7h-9zM1.500 0v3M10.500 0v3M1.500 13v3M10.500 13v3M14.500 0v3M14.500 10v6" />
          <path d="M13 4h3v4h-3z" fill="currentColor" stroke="none" />
        </Svg>
      </button>
      {apps.map(app => (
        <button
          key={app.name}
          aria-label={app.name}
          className={clsx('flex w-[38px] flex-col items-center', app.active && 'bg-[#414d6c]')}
        >
          <span className="flex h-[38px] items-center">{app.icon}</span>
          <span className={clsx('h-[2px]', app.active ? 'w-full' : 'w-[30px]', app.open && 'bg-[#83b9ef]')} />
        </button>
      ))}
      <div className="ml-auto flex items-center">
        <button className="flex items-center gap-[9px]">
          <Svg w={24} h={17}>
            <path d="M6 16.500a5 5 0 0 1-1-9.800A7 7 0 0 1 18 6a5.300 5.300 0 0 1 0 10.500z" fill="#d3e5f4" stroke="none" />
            <path d="M8 16.500a4.500 4.500 0 0 1 0-8 5 5 0 0 1 8 0 4 4 0 0 1 3 8z" fill="#a9cbe8" stroke="none" />
          </Svg>
          <span className="w-[28px] text-[13px]">63°F</span>
        </button>
        <button aria-label="Show hidden icons" className="ml-[10px] flex w-8 justify-center">
          <Svg w={13} h={8}><path d="M1 7l5.500-5.500L12 7" strokeWidth="1.500" /></Svg>
        </button>
        <button aria-label="Meet Now" className="flex w-8 justify-center">
          <Svg w={12} h={16}>
            <path d="M.5 5.500h7v6h-7zM7.500 7.500l3.500-2v6l-3.500-2M2 2.500c2-2 6-2 8 0M2 14c2 2 6 2 8 0" />
          </Svg>
        </button>
        <button aria-label="Updates" className="flex w-8 justify-center">
          <Svg w={17} h={16}>
            <path d="M14.500 8V1.500L1.500 3v10.500L9 14" />
            <path d="M6 9V7a3 3 0 0 1 5-1.500M11 3v3H8M6 11c1 .5 3 .5 3.500-1" />
            <circle cx="13" cy="12" r="3.500" fill="#2d7fd0" stroke="none" />
          </Svg>
        </button>
        <button aria-label="Network" className="flex w-8 justify-center text-[#c3c8d6]">
          <Svg w={14} h={14}>
            <path d="M1 13A12 12 0 0 1 13 1M4.500 13A8.500 8.500 0 0 1 13 4.500M8 13a5 5 0 0 1 5-5" strokeWidth="1.500" />
            <circle cx="12" cy="12" r="1.500" fill="#fff" stroke="none" />
          </Svg>
        </button>
        <button aria-label="Volume" className="flex w-8 justify-center">
          <Svg w={16} h={14}>
            <path d="M.5 5h3l3-3v10l-3-3h-3zM9 5q1.500 2 0 4M11 3q3 4 0 8M13 1.500q4 5.500 0 11" />
          </Svg>
        </button>
        <button aria-label="Pen" className="flex w-10 justify-center">
          <Svg w={17} h={16}>
            <path d="M6 13l1-5 4.500-7 2.500 1.500-4.500 8zM5 7c-5 1-5 6-1 5.500M4 15l2-2M9 13c2-1 2-5 3.500-4.500s-1 4 3.500 1.500" />
          </Svg>
        </button>
        <div className="ml-[3px] w-[58px] text-center text-[11px] leading-[18px]">
          <p>11:09 AM</p>
          <p>3/8/2022</p>
        </div>
        <button aria-label="Notifications, 1 new" className="relative ml-4 mr-[17px] flex w-6">
          <Svg w={16} h={16}>
            <path d="M0 0h16v12h-4v4l-4-4H0z" fill="#fff" stroke="none" />
            <path d="M3 3.500h10M3 6.500h10M3 9h5" stroke="#1b2745" />
          </Svg>
          <span className="absolute left-2 top-1 flex h-4 w-4 items-center justify-center rounded-full bg-[#333846] text-[11px] outline outline-[#8a8d96]">
            1
          </span>
        </button>
      </div>
    </footer>
  )
}

// ---------- overlays (recorder tools + pointer) ----------

function Overlays() {
  return (
    <>
      <button
        aria-label="Pen tool"
        className="absolute -right-[10px] top-[106px] flex h-[53px] w-[53px] items-center rounded-full border-4 border-[#989898] bg-[#dfe2e1] pl-2 text-black"
      >
        <Svg w={28} h={36}>
          <path
            d="M3 26 6 15 19 2q2-2 4 0l2 2q2 2 0 4L13 22z"
            fill="#fff"
            strokeWidth="2"
            strokeLinejoin="round"
          />
          <path d="M6 15q5 2 7 7M3 26l4-3" strokeWidth="2" />
          <path d="M1 30c6-5 10 3 15 1s6-4 10-3v3c-5-1-7 4-12 4s-7-5-13-2z" fill="#fff" strokeWidth="1.500" />
        </Svg>
      </button>
      <button
        aria-label="Pointer tool"
        className="absolute -right-[10px] top-[190px] flex h-[53px] w-[53px] items-center rounded-full border-4 border-[#37509d] bg-[#e3e3e3] pl-[9px] text-black"
      >
        <Svg w={26} h={28}>
          <path
            d="M2 3q2-3 4 0l4 8 3-1.500 2 1 2-1.500 2 1.500 2-1.500 2 2 1.500 10-3 3-11 2-8-6q-2-4 1-4l2 1z"
            fill="#d5d5d5"
            strokeWidth="1.800"
            strokeLinejoin="round"
          />
        </Svg>
      </button>
      <div className="pointer-events-none absolute bottom-[43px] left-8 flex h-[72px] w-[72px] items-start rounded-full border-4 border-[#f5f52a] pl-[30px] pt-[30px]">
        <Svg w={13} h={20}>
          <path d="M1 1v16l4-3.500 2.500 5.500 2.500-1-2.500-5.500H12z" fill="#fff" stroke="#222" />
        </Svg>
      </div>
    </>
  )
}

export default function App() {
  return (
    <div className="relative flex h-screen flex-col overflow-hidden font-['Open_Sans','Noto_Sans',sans-serif] text-xs">
      <TitleBar />
      <TabRow />
      <div className="flex h-[93px] shrink-0 overflow-hidden border-b border-[#cfcfcf] bg-[#f1f1f1] pt-[2px]">
        <ClipboardGroup />
        <SlidesGroup />
        <FontGroup />
        <ParagraphGroup />
        <DrawingGroup />
        <EditingGroup />
      </div>
      <Workspace />
      <StatusBar />
      <Taskbar />
      <Overlays />
    </div>
  )
}
